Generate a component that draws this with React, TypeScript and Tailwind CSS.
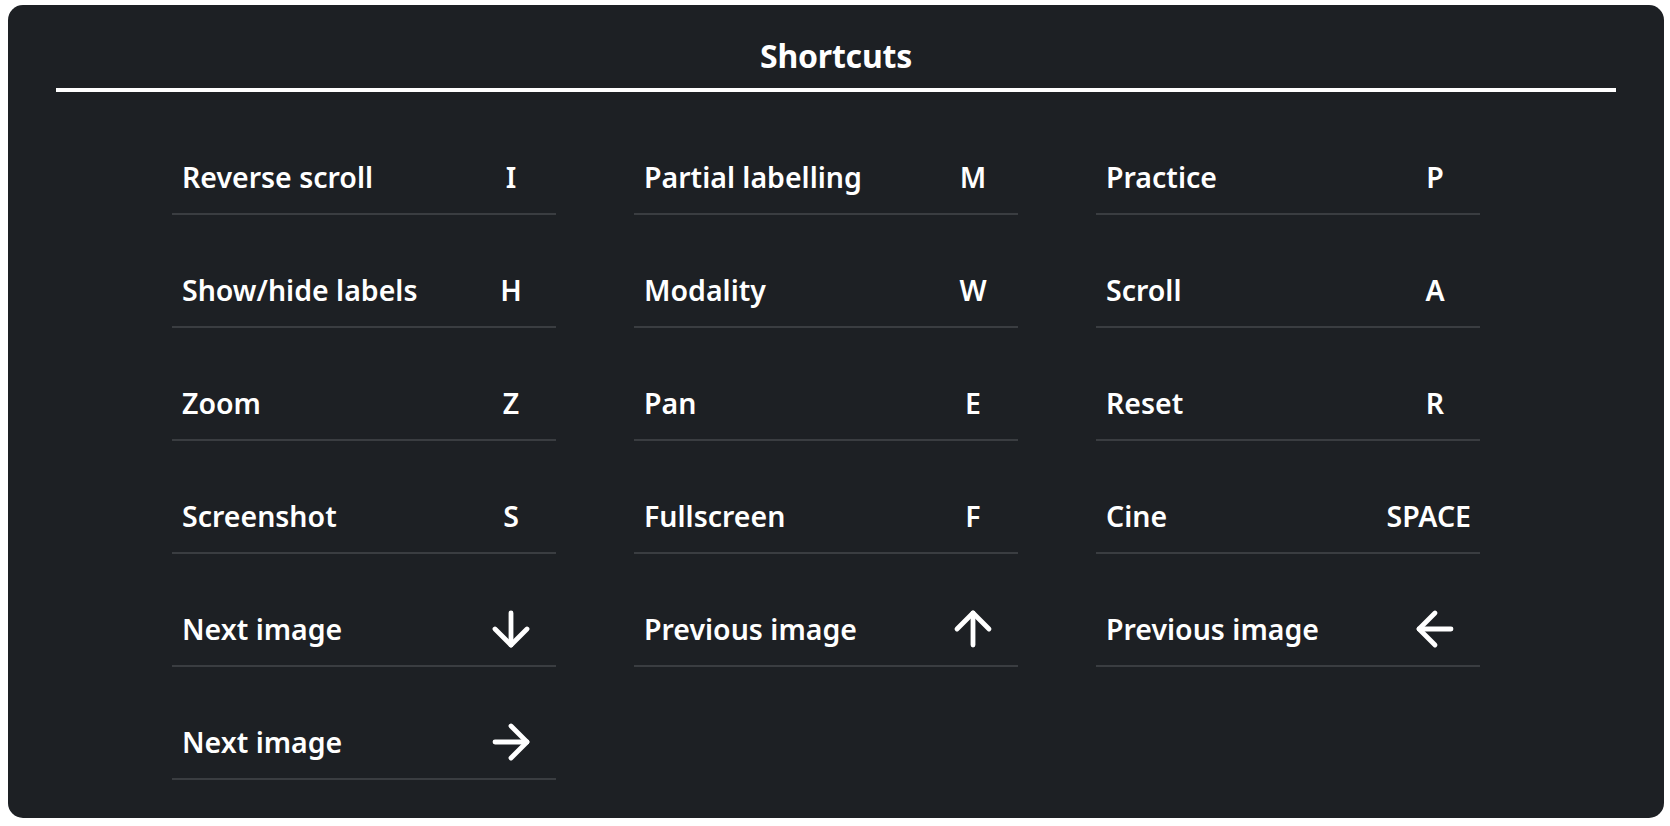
import React from "react";

type Shortcut = { label: string; keyName: string };

const shortcuts: Shortcut[] = [
  { label: "Reverse scroll", keyName: "I" },
  { label: "Partial labelling", keyName: "M" },
  { label: "Practice", keyName: "P" },
  { label: "Show/hide labels", keyName: "H" },
  { label: "Modality", keyName: "W" },
  { label: "Scroll", keyName: "A" },
  { label: "Zoom", keyName: "Z" },
  { label: "Pan", keyName: "E" },
  { label: "Reset", keyName: "R" },
  { label: "Screenshot", keyName: "S" },
  { label: "Fullscreen", keyName: "F" },
  { label: "Cine", keyName: "SPACE" },
  { label: "Next image", keyName: "down" },
  { label: "Previous image", keyName: "up" },
  { label: "Previous image", keyName: "left" },
  { label: "Next image", keyName: "right" },
];

// arrows drawn in a 40x40 box, pointing down by default and rotated for the rest
function Arrow({ dir }: { dir: string }) {
  const rotate =
    dir === "up" ? "rotate-180" : dir === "left" ? "rotate-90" : dir === "right" ? "-rotate-90" : "";
  return (
    <svg
      width="40"
      height="40"
      viewBox="0 0 40 40"
      className={rotate}
      fill="none"
      stroke="white"
      strokeWidth="4.8"
      strokeLinecap="round"
      strokeLinejoin="round"
    >
      <path d="M20 4v32" />
      <path d="M4 20l16 16 16-16" />
    </svg>
  );
}

function ShortcutRow({ item }: { item: Shortcut }) {
  const isArrow = ["up", "down", "left", "right"].includes(item.keyName);
  return (
    <div className="h-[113px] flex items-end">
      <div className="w-full flex items-center justify-between border-b-2 border-[#3a3d41] pb-[16px] pl-[10px]">
        <span className="h-[40px] leading-[40px] text-[28.5px] font-semibold text-white whitespace-nowrap">
          {item.label}
        </span>
        <span className="min-w-[72px] mr-[9px] h-[40px] leading-[40px] flex justify-center text-[28.5px] font-semibold text-white whitespace-nowrap">
          {isArrow ? <Arrow dir={item.keyName} /> : item.keyName}
        </span>
      </div>
    </div>
  );
}

export default function App() {
  return (
    <div
      className="min-h-screen bg-white pt-[5px] pl-[8px] pr-[6px] pb-[8px]"
      style={{ fontFamily: '"Noto Sans", "Open Sans", sans-serif' }}
    >
      <div className="h-[813px] rounded-[15px] bg-[#1d2024] flex flex-col">
        <div className="pt-[31px] flex flex-col items-center">
          <h1 className="text-[32px] leading-[40px] font-bold text-white tracking-[-0.2px]">Shortcuts</h1>
        </div>
        <div className="mx-[48px] mt-[12px] h-[4px] bg-white" />
        <div className="mt-[10px] ml-[164px] grid grid-cols-[384px_384px_384px] gap-x-[78px]">
          {shortcuts.map((s, i) => (
            <ShortcutRow key={i} item={s} />
          ))}
        </div>
      </div>
    </div>
  );
}
